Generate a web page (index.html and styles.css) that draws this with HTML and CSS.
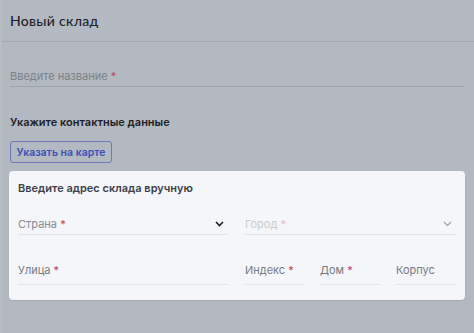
FILE: index.html
```html
<!DOCTYPE html>
<html lang="ru">
<head>
<meta charset="utf-8">
<link rel="stylesheet" href="styles.css">
</head>
<body>
<div class="page">
  <header class="header"><h1 class="title">Новый склад</h1></header>
  <div class="content">
    <div class="field name-field"><span class="label">Введите название <span class="req">*</span></span></div>
    <h2 class="section">Укажите контактные данные</h2>
    <button class="map-btn">Указать на карте</button>
    <div class="card">
      <h3 class="card-title">Введите адрес склада вручную</h3>
      <div class="row">
        <div class="field select"><span class="label">Страна <span class="req">*</span></span>
          <svg class="chev" width="9" height="6" viewBox="0 0 9 6"><path d="M1 1l3.5 3.5L8 1" fill="none" stroke="#1b1e22" stroke-width="1.6"/></svg></div>
        <div class="field select disabled"><span class="label">Город <span class="req">*</span></span>
          <svg class="chev" width="9" height="6" viewBox="0 0 9 6"><path d="M1 1l3.5 3.5L8 1" fill="none" stroke="#9aa0a8" stroke-width="1.2"/></svg></div>
      </div>
      <div class="row row-2">
        <div class="field"><span class="label">Улица <span class="req">*</span></span></div>
        <div class="subrow">
          <div class="field"><span class="label">Индекс <span class="req">*</span></span></div>
          <div class="field"><span class="label">Дом <span class="req">*</span></span></div>
          <div class="field"><span class="label">Корпус</span></div>
        </div>
      </div>
    </div>
  </div>
</div>
</body>
</html>
```
FILE: styles.css
```css
html, body { margin: 0; padding: 0; }
body {
  background: #b3b9c0;
  font-family: Inter, "Noto Sans", sans-serif;
  width: 474px;
  height: 333px;
  overflow: hidden;
}
.page { border-left: 2px solid #b8bec4; min-height: 333px; }
.header {
  box-sizing: border-box;
  height: 42px;
  border-bottom: 1px solid #a2a8af;
  display: flex;
  align-items: center;
  padding: 0 8px 1px;
}
.title {
  margin: 0;
  font-family: Lato, "Noto Sans", sans-serif;
  font-size: 14px;
  font-weight: 500;
  color: #1e2228;
  letter-spacing: 0.3px;
}
.content { padding: 0 10px 0 8px; }
.field {
  box-sizing: border-box;
  height: 21px;
  border-bottom: 1px solid #9ea4ab;
  display: flex;
  align-items: center;
  justify-content: space-between;
  font-size: 11px;
  color: #7a8089;
}
.name-field { margin-top: 24px; }
.req { color: #c0415f; }
.section {
  margin: 28px 0 0;
  font-size: 11px;
  font-weight: 600;
  color: #1e2228;
  line-height: 14px;
}
.map-btn {
  margin-top: 12px;
  display: block;
  box-sizing: border-box;
  height: 22px;
  width: 102px;
  padding: 0;
  font-family: Inter, "Noto Sans", sans-serif;
  font-size: 10.5px;
  font-weight: 600;
  color: #3750b8;
  background: transparent;
  border: 1.5px solid #6c7bb7;
  border-radius: 3px;
}
.card {
  margin-top: 8px;
  margin-left: -1px;
  margin-right: -1px;
  background: #f5f6f9;
  border-radius: 4px;
  padding: 10px 9px 15px 9px;
  box-shadow: 0 1px 1px rgba(0,0,0,0.08);
}
.card-title {
  margin: 0;
  font-size: 11px;
  font-weight: 600;
  color: #3c4149;
  line-height: 14px;
}
.card .field {
  border-bottom-color: #e1e4e9;
  color: #858b93;
  height: 21px;
}
.row {
  display: grid;
  grid-template-columns: 210px 211px;
  column-gap: 17px;
  margin-top: 19px;
}
.row-2 { margin-top: 23px; }
.row-2 .field {
  height: 27px;
  padding-bottom: 2px;
  color: #757b83;
}
.select .chev { margin-right: 4px; }
.disabled .label { color: #c9cdd2; }
.disabled .req { color: #ecb9c5; }
.subrow {
  display: grid;
  grid-template-columns: 59px 60px 60px;
  column-gap: 16px;
}
```
